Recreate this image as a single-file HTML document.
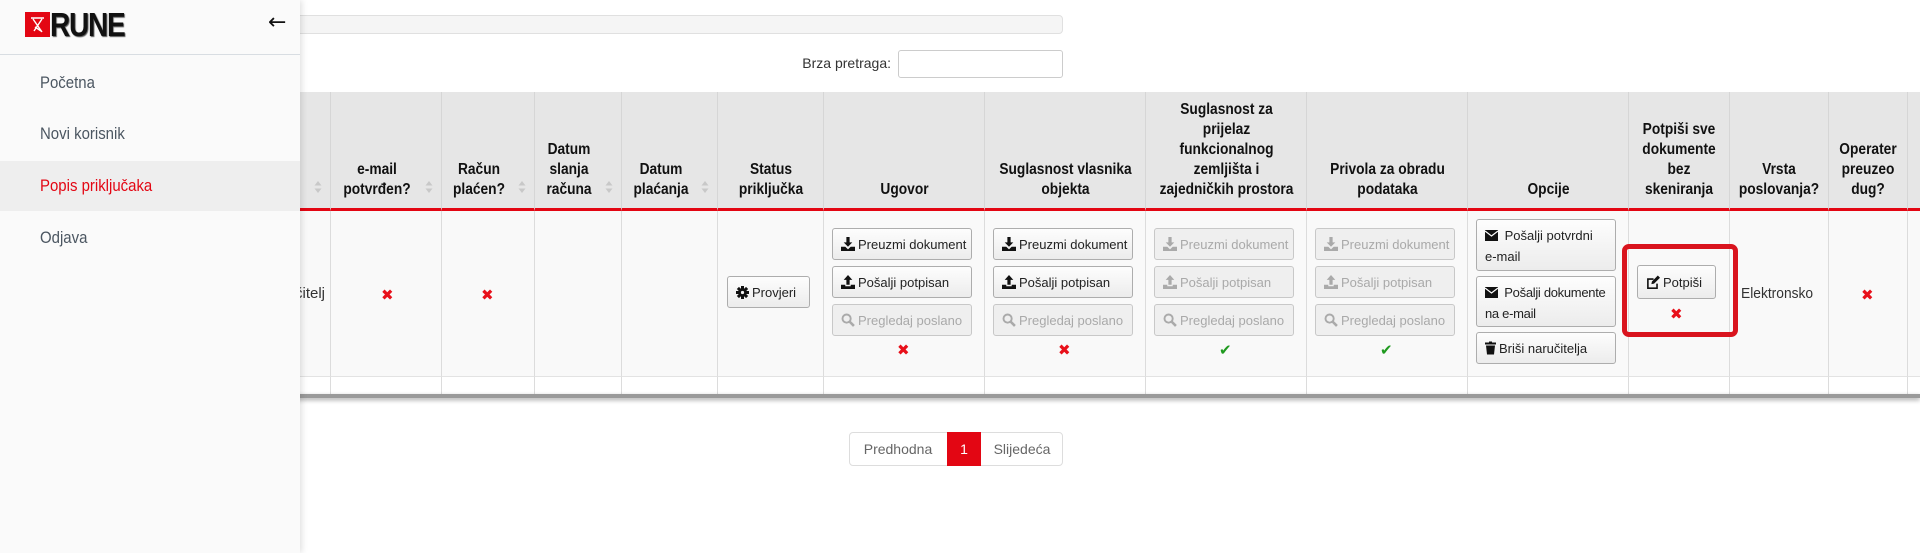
<!DOCTYPE html>
<html><head><meta charset="utf-8">
<style>
*{box-sizing:border-box;margin:0;padding:0}
body{width:1920px;height:553px;overflow:hidden;background:#fff;font-family:"Liberation Sans",sans-serif;position:relative}
.a{position:absolute}
.hd{position:absolute;top:92px;height:119px;background:#e6e6e6;border-right:1px solid #d6d6d6;border-bottom:3px solid #e30613;display:flex;flex-direction:column;justify-content:flex-end;align-items:center;text-align:center;padding:0 0 8px;font-weight:bold;font-size:16px;line-height:20px;color:#111}
.hd .t{transform:scaleX(0.86);flex:none}
.sort{position:absolute;right:8px;bottom:14px;width:8px;height:14px}
.bd{position:absolute;top:211px;height:166px;background:#f9f9f9;border-right:1px solid #dcdcdc;border-bottom:1px solid #e3e3e3}
.bd2{position:absolute;top:377px;height:18px;background:#fff;border-right:1px solid #dcdcdc}
.btn{position:absolute;height:32px;border:1px solid #adadad;border-radius:3px;background:linear-gradient(#fdfdfd,#ececec);font-size:13px;color:#222;display:flex;align-items:center;padding-left:8px;white-space:nowrap;overflow:hidden}
.btn svg{margin-right:3px;flex:none}
.dis{color:#a9a9a9;border-color:#c8c8c8;background:#efefef}
.x{position:absolute;color:#e8101a;font-size:15px;font-weight:bold;font-family:"DejaVu Sans",sans-serif;line-height:16px}
.ok{position:absolute;color:#1f9a1f;font-size:15px;font-family:"DejaVu Sans",sans-serif;line-height:16px}
.m{position:absolute;left:40px;font-size:17px;color:#4b5661;transform:scaleX(0.88);transform-origin:left}
</style></head><body>

<div class="a" style="left:280px;top:15px;width:783px;height:19px;background:#f5f5f5;border:1px solid #e0e0e0;border-radius:4px"></div>
<div class="a" style="left:780px;top:55px;width:111px;text-align:right;font-size:14px;color:#333">Brza pretraga:</div>
<div class="a" style="left:898px;top:50px;width:165px;height:28px;border:1px solid #ccc;border-radius:3px;background:#fff"></div>

<!-- header -->
<div class="hd" style="left:0;width:331px"><svg class="sort" viewBox="0 0 8 14"><path d="M4 1L7.5 5.5H.5z M4 13L7.5 8.5H.5z" fill="#c8c8c8"/></svg></div>
<div class="hd" style="left:331px;width:111px;padding-right:18px"><div class="t" style="width:108px">e-mail<br>potvrđen?</div><svg class="sort" viewBox="0 0 8 14"><path d="M4 1L7.5 5.5H.5z M4 13L7.5 8.5H.5z" fill="#c8c8c8"/></svg></div>
<div class="hd" style="left:442px;width:93px;padding-right:18px"><div class="t" style="width:88px">Račun<br>plaćen?</div><svg class="sort" viewBox="0 0 8 14"><path d="M4 1L7.5 5.5H.5z M4 13L7.5 8.5H.5z" fill="#c8c8c8"/></svg></div>
<div class="hd" style="left:535px;width:87px;padding-right:18px"><div class="t" style="width:80px">Datum<br>slanja<br>računa</div><svg class="sort" viewBox="0 0 8 14"><path d="M4 1L7.5 5.5H.5z M4 13L7.5 8.5H.5z" fill="#c8c8c8"/></svg></div>
<div class="hd" style="left:622px;width:96px;padding-right:18px"><div class="t" style="width:90px">Datum<br>plaćanja</div><svg class="sort" viewBox="0 0 8 14"><path d="M4 1L7.5 5.5H.5z M4 13L7.5 8.5H.5z" fill="#c8c8c8"/></svg></div>
<div class="hd" style="left:718px;width:106px"><div class="t" style="width:120px">Status<br>priključka</div></div>
<div class="hd" style="left:824px;width:161px"><div class="t" style="width:185px">Ugovor</div></div>
<div class="hd" style="left:985px;width:161px"><div class="t" style="width:185px">Suglasnost vlasnika<br>objekta</div></div>
<div class="hd" style="left:1146px;width:161px"><div class="t" style="width:185px">Suglasnost za<br>prijelaz<br>funkcionalnog<br>zemljišta i<br>zajedničkih prostora</div></div>
<div class="hd" style="left:1307px;width:161px"><div class="t" style="width:185px">Privola za obradu<br>podataka</div></div>
<div class="hd" style="left:1468px;width:161px"><div class="t" style="width:185px">Opcije</div></div>
<div class="hd" style="left:1629px;width:101px"><div class="t" style="width:118px">Potpiši sve<br>dokumente<br>bez<br>skeniranja</div></div>
<div class="hd" style="left:1730px;width:99px"><div class="t" style="width:116px">Vrsta<br>poslovanja?</div></div>
<div class="hd" style="left:1829px;width:79px"><div class="t" style="width:92px">Operater<br>preuzeo<br>dug?</div></div>
<div class="hd" style="left:1908px;width:40px"></div>

<!-- body cells -->
<div class="bd" style="left:0;width:331px"></div><div class="bd" style="left:331px;width:111px"></div><div class="bd" style="left:442px;width:93px"></div><div class="bd" style="left:535px;width:87px"></div><div class="bd" style="left:622px;width:96px"></div><div class="bd" style="left:718px;width:106px"></div><div class="bd" style="left:824px;width:161px"></div><div class="bd" style="left:985px;width:161px"></div><div class="bd" style="left:1146px;width:161px"></div><div class="bd" style="left:1307px;width:161px"></div><div class="bd" style="left:1468px;width:161px"></div><div class="bd" style="left:1629px;width:101px"></div><div class="bd" style="left:1730px;width:99px"></div><div class="bd" style="left:1829px;width:79px"></div><div class="bd" style="left:1908px;width:40px"></div>
<div class="bd2" style="left:0;width:331px"></div><div class="bd2" style="left:331px;width:111px"></div><div class="bd2" style="left:442px;width:93px"></div><div class="bd2" style="left:535px;width:87px"></div><div class="bd2" style="left:622px;width:96px"></div><div class="bd2" style="left:718px;width:106px"></div><div class="bd2" style="left:824px;width:161px"></div><div class="bd2" style="left:985px;width:161px"></div><div class="bd2" style="left:1146px;width:161px"></div><div class="bd2" style="left:1307px;width:161px"></div><div class="bd2" style="left:1468px;width:161px"></div><div class="bd2" style="left:1629px;width:101px"></div><div class="bd2" style="left:1730px;width:99px"></div><div class="bd2" style="left:1829px;width:79px"></div><div class="bd2" style="left:1908px;width:40px"></div>
<div class="a" style="left:0;top:394px;width:1920px;height:4px;background:#9a9a9a;box-shadow:0 2px 5px rgba(0,0,0,.35)"></div>

<!-- body content -->
<div class="a" style="left:250px;top:285px;width:75px;text-align:right;font-size:15px;color:#333">naručitelj</div>
<div class="x" style="left:381px;top:287px">✖</div>
<div class="x" style="left:481px;top:287px">✖</div>

<div class="btn" style="left:727px;top:276px;width:83px;height:32px"><svg width="13" height="13" viewBox="0 0 13 13"><g fill="#111"><rect x="5" y="0" width="3" height="13"/><rect x="0" y="5" width="13" height="3"/><rect x="5" y="0" width="3" height="13" transform="rotate(45 6.5 6.5)"/><rect x="5" y="0" width="3" height="13" transform="rotate(-45 6.5 6.5)"/><circle cx="6.5" cy="6.5" r="4.3"/></g><circle cx="6.5" cy="6.5" r="1.6" fill="#f3f3f3"/></svg>Provjeri</div>

<div class="btn" style="left:832px;top:228px;width:140px"><svg width="14" height="14" viewBox="0 0 13 13"><path d="M5 0h3v5h2.5L6.5 9 2.5 5H5z M0 9h4l2.5 2.5L9 9h4v4H0z" fill="#111"/></svg>Preuzmi dokument</div>
<div class="btn" style="left:832px;top:266px;width:140px"><svg width="14" height="14" viewBox="0 0 13 13"><path d="M5 9h3V4.5h2.5L6.5 0 2.5 4.5H5z M0 9h4v1.5h5V9h4v4H0z" fill="#111"/></svg>Pošalji potpisan</div>
<div class="btn dis" style="left:832px;top:304px;width:140px"><svg width="14" height="14" viewBox="0 0 13 13"><circle cx="5.2" cy="5.2" r="3.8" fill="none" stroke="#aaa" stroke-width="1.8"/><path d="M8 8l4 4" stroke="#aaa" stroke-width="2.4"/></svg>Pregledaj poslano</div>
<div class="x" style="left:897px;top:342px">✖</div>

<div class="btn" style="left:993px;top:228px;width:140px"><svg width="14" height="14" viewBox="0 0 13 13"><path d="M5 0h3v5h2.5L6.5 9 2.5 5H5z M0 9h4l2.5 2.5L9 9h4v4H0z" fill="#111"/></svg>Preuzmi dokument</div>
<div class="btn" style="left:993px;top:266px;width:140px"><svg width="14" height="14" viewBox="0 0 13 13"><path d="M5 9h3V4.5h2.5L6.5 0 2.5 4.5H5z M0 9h4v1.5h5V9h4v4H0z" fill="#111"/></svg>Pošalji potpisan</div>
<div class="btn dis" style="left:993px;top:304px;width:140px"><svg width="14" height="14" viewBox="0 0 13 13"><circle cx="5.2" cy="5.2" r="3.8" fill="none" stroke="#aaa" stroke-width="1.8"/><path d="M8 8l4 4" stroke="#aaa" stroke-width="2.4"/></svg>Pregledaj poslano</div>
<div class="x" style="left:1058px;top:342px">✖</div>

<div class="btn dis" style="left:1154px;top:228px;width:140px"><svg width="14" height="14" viewBox="0 0 13 13"><path d="M5 0h3v5h2.5L6.5 9 2.5 5H5z M0 9h4l2.5 2.5L9 9h4v4H0z" fill="#aaa"/></svg>Preuzmi dokument</div>
<div class="btn dis" style="left:1154px;top:266px;width:140px"><svg width="14" height="14" viewBox="0 0 13 13"><path d="M5 9h3V4.5h2.5L6.5 0 2.5 4.5H5z M0 9h4v1.5h5V9h4v4H0z" fill="#aaa"/></svg>Pošalji potpisan</div>
<div class="btn dis" style="left:1154px;top:304px;width:140px"><svg width="14" height="14" viewBox="0 0 13 13"><circle cx="5.2" cy="5.2" r="3.8" fill="none" stroke="#aaa" stroke-width="1.8"/><path d="M8 8l4 4" stroke="#aaa" stroke-width="2.4"/></svg>Pregledaj poslano</div>
<div class="ok" style="left:1219px;top:342px">✔</div>

<div class="btn dis" style="left:1315px;top:228px;width:140px"><svg width="14" height="14" viewBox="0 0 13 13"><path d="M5 0h3v5h2.5L6.5 9 2.5 5H5z M0 9h4l2.5 2.5L9 9h4v4H0z" fill="#aaa"/></svg>Preuzmi dokument</div>
<div class="btn dis" style="left:1315px;top:266px;width:140px"><svg width="14" height="14" viewBox="0 0 13 13"><path d="M5 9h3V4.5h2.5L6.5 0 2.5 4.5H5z M0 9h4v1.5h5V9h4v4H0z" fill="#aaa"/></svg>Pošalji potpisan</div>
<div class="btn dis" style="left:1315px;top:304px;width:140px"><svg width="14" height="14" viewBox="0 0 13 13"><circle cx="5.2" cy="5.2" r="3.8" fill="none" stroke="#aaa" stroke-width="1.8"/><path d="M8 8l4 4" stroke="#aaa" stroke-width="2.4"/></svg>Pregledaj poslano</div>
<div class="ok" style="left:1380px;top:342px">✔</div>

<div class="btn" style="left:1476px;top:219px;width:140px;height:52px;padding-top:5px;line-height:21px;display:block"><svg width="13" height="11" viewBox="0 0 13 11" style="vertical-align:-1px"><rect width="13" height="11" fill="#111"/><path d="M0 1l6.5 5L13 1" fill="none" stroke="#fff" stroke-width="1.2"/></svg> Pošalji potvrdni<br>e-mail</div>
<div class="btn" style="left:1476px;top:276px;width:140px;height:51px;padding-top:5px;line-height:21px;display:block;letter-spacing:-0.3px"><svg width="13" height="11" viewBox="0 0 13 11" style="vertical-align:-1px"><rect width="13" height="11" fill="#111"/><path d="M0 1l6.5 5L13 1" fill="none" stroke="#fff" stroke-width="1.2"/></svg> Pošalji dokumente<br>na e-mail</div>
<div class="btn" style="left:1476px;top:332px;width:140px"><svg width="11" height="14" viewBox="0 0 11 13"><path d="M0 1h4V0h3v1h4v2H0z M1 4h9l-1 9H2z" fill="#111"/></svg>Briši naručitelja</div>

<div class="a" style="left:1622px;top:244px;width:116px;height:93px;border:5px solid #d9141e;border-radius:7px"></div>
<div class="btn" style="left:1637px;top:265px;width:79px;height:34px"><svg width="14" height="14" viewBox="0 0 13 13"><path d="M1 3h6v1.5H2.5v7h7V8H11v5H1z" fill="#111"/><path d="M5 8.5l.5-2.5L11 .5l2 2L7.5 8z" fill="#111"/></svg>Potpiši</div>
<div class="x" style="left:1670px;top:306px">✖</div>

<div class="a" style="left:1741px;top:285px;font-size:15px;color:#333;transform:scaleX(0.92);transform-origin:left">Elektronsko</div>
<div class="x" style="left:1861px;top:287px">✖</div>

<div class="a" style="left:849px;top:432px;width:214px;height:34px;border:1px solid #ddd;border-radius:4px;background:#fff"></div>
<div class="a" style="left:849px;top:432px;width:98px;height:34px;line-height:34px;text-align:center;font-size:14px;color:#666">Predhodna</div>
<div class="a" style="left:947px;top:432px;width:34px;height:34px;line-height:34px;text-align:center;font-size:14px;color:#fff;background:#e30613">1</div>
<div class="a" style="left:981px;top:432px;width:82px;height:34px;line-height:34px;text-align:center;font-size:14px;color:#666">Slijedeća</div>

<!-- sidebar -->
<div class="a" style="left:0;top:0;width:300px;height:553px;background:#fafafa;box-shadow:2px 0 6px rgba(0,0,0,.12)">
  <div class="a" style="left:0;top:54px;width:300px;height:1px;background:#d8dde2"></div>
  <div class="a" style="left:25px;top:12px;width:25px;height:25px;background:#e30613"><svg width="25" height="25" viewBox="0 0 25 25"><path d="M6 6h13M8 7l9 13M17 7L9 19M10 15l6 4" stroke="#fff" stroke-width="1.4" fill="none"/></svg></div>
  <div class="a" style="left:50px;top:9px;font-size:33px;font-weight:bold;letter-spacing:-1.5px;color:#111;line-height:32px;text-shadow:1px 1px 1px #555;transform:scaleX(0.85);transform-origin:left">RUNE</div>
  <div class="a" style="left:268px;top:10px;font-size:22px;color:#111;font-family:'DejaVu Sans',sans-serif">←</div>
  <div class="m" style="top:73px">Početna</div>
  <div class="m" style="top:124px">Novi korisnik</div>
  <div class="a" style="left:0;top:161px;width:300px;height:50px;background:#eeeeee"></div>
  <div class="m" style="top:176px;color:#e30613">Popis priključaka</div>
  <div class="m" style="top:228px">Odjava</div>
</div>
</body></html>
